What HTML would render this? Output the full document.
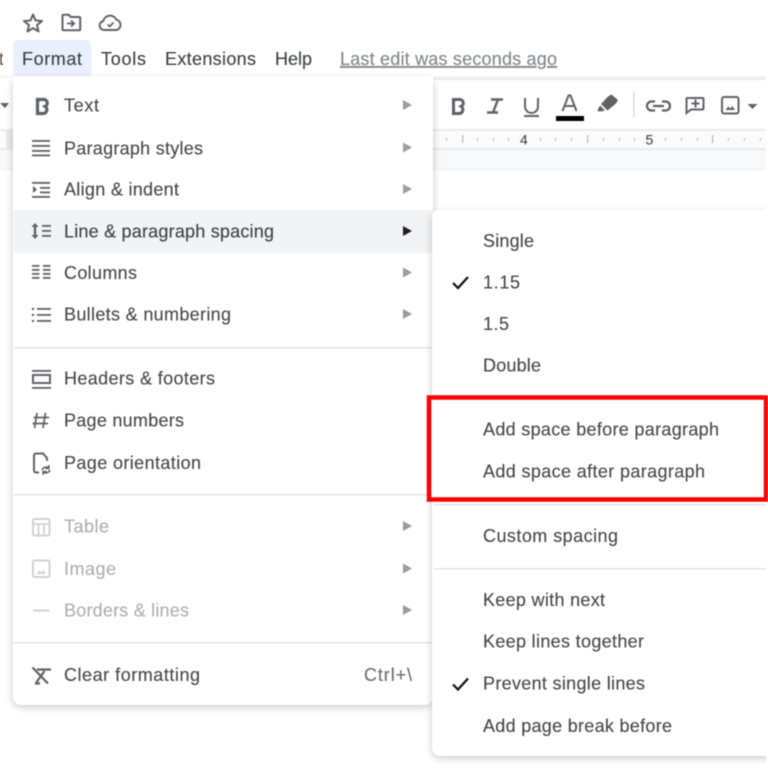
<!DOCTYPE html>
<html lang="en"><head><meta charset="utf-8"><title>Format menu</title>
<style>
html,body{margin:0;padding:0;background:#fff;width:768px;height:770px;overflow:hidden}
svg{display:block;filter:blur(.45px)}
text{font-family:"Liberation Sans",sans-serif;font-size:18px;fill:#45484c;stroke:#45484c;stroke-width:.12px}
.m{fill:#3c4043}
.d{fill:#abafb5;stroke:#abafb5}
.l{fill:#80868b;stroke:#80868b;text-decoration:underline}
.i{fill:none;stroke:#5f6368;stroke-width:2}
.g{fill:#5f6368}
.a{fill:#9a9da1}
</style></head><body>
<svg width="768" height="770" viewBox="0 0 768 770" xmlns="http://www.w3.org/2000/svg">
<defs>
<filter id="s" x="-10%" y="-10%" width="120%" height="120%"><feGaussianBlur stdDeviation="4"/></filter>
</defs>
<rect width="768" height="770" fill="#fff"/>

<!-- top icons -->
<path d="M33 14.500l2.500 6 6.500.5-5 4.200 1.600 6.300-5.600-3.400-5.600 3.400 1.600-6.300-5-4.200 6.500-.5z" fill="none" stroke="#5f6368" stroke-width="2" stroke-linejoin="round"/>
<path d="M62.500 17v-1.500a.8.8 0 0 1 .8-.8h5.500l2 2.300h8.400a1 1 0 0 1 1 1v11.300a1 1 0 0 1-1 1H63.500a1 1 0 0 1-1-1z" class="i"/>
<path d="M67 23.500h7M71 20.500l3.200 3-3.200 3" fill="none" stroke="#5f6368" stroke-width="1.800"/>
<path d="M107 30h-3a4.500 4.500 0 0 1-.8-8.900 7 7 0 0 1 13.100-1.500 5.400 5.400 0 0 1 .5 10.400z" class="i"/>
<path d="M107.500 24.500l2.300 2 3.700-4" fill="none" stroke="#5f6368" stroke-width="1.700"/>

<!-- menu bar -->
<text x="-8" y="65" class="m" textLength="11" lengthAdjust="spacingAndGlyphs">at</text>
<path d="M13.300 44a4 4 0 0 1 4-4h70a4 4 0 0 1 4 4v32h-78z" fill="#e8f0fe"/>
<text x="22" y="65" class="m" textLength="60" lengthAdjust="spacing">Format</text>
<text x="101" y="65" class="m" textLength="45" lengthAdjust="spacing">Tools</text>
<text x="165" y="65" class="m" textLength="91" lengthAdjust="spacing">Extensions</text>
<text x="275" y="65" class="m" textLength="37" lengthAdjust="spacing">Help</text>
<text x="340" y="65" class="l" textLength="217" lengthAdjust="spacing">Last edit was seconds ago</text>

<!-- toolbar and ruler background -->
<rect x="0" y="76" width="766" height="2" fill="#f1f3f4"/>
<rect x="433" y="78" width="333" height="2" fill="#e8eaed"/>
<rect x="0" y="129" width="766" height="2" fill="#e8eaed"/>
<rect x="0" y="131" width="766" height="17" fill="#fbfbfc"/>
<rect x="0" y="148" width="766" height="2" fill="#e8eaed"/>
<rect x="0" y="150" width="766" height="20" fill="#f8f9fa"/>
<rect x="0" y="169" width="766" height="1" fill="#eceef0"/>
<path d="M0 103h9l-4 5z" fill="#5f6368"/>
<rect x="6" y="130" width="7" height="18" fill="#e8eaed"/>

<!-- toolbar icons -->
<path d="M453.500 99.500h6a3.600 3.600 0 0 1 1.600 6.900 3.900 3.900 0 0 1-1.600 7.100h-6z" fill="none" stroke="#5f6368" stroke-width="3"/>
<path d="M491 99.500h12M487 112.500h11M498 99.500l-5 13" fill="none" stroke="#5f6368" stroke-width="2.400"/>
<path d="M525 98v8.500a6.500 6.500 0 0 0 13 0V98" fill="none" stroke="#5f6368" stroke-width="2"/>
<rect x="524" y="115" width="15" height="2" fill="#5f6368"/>
<path d="M562.500 111l6-15.500h2l6 15.500M564.500 106h10" fill="none" stroke="#5f6368" stroke-width="2"/>
<rect x="556" y="116" width="28" height="5" fill="#000"/>
<path d="M611.500 94.500l6.500 5.500-2 3.500-8.500 7-6.500-6.500 7-7.500z" fill="#5f6368"/><path d="M600 105.500l5 5-3 .8-3.800.2-.6-1.500z" fill="#5f6368"/>
<rect x="633" y="92" width="1.500" height="25" fill="#dadce0"/>
<path d="M655 101.500h-3.500a4.500 4.500 0 0 0 0 9h3.500M662 101.500h3.500a4.500 4.500 0 0 1 0 9H662M653 106h11" fill="none" stroke="#5f6368" stroke-width="2.300"/>
<path d="M687.500 98h15a1 1 0 0 1 1 1v9.500a1 1 0 0 1-1 1h-11.500l-4.500 3.500V99a1 1 0 0 1 1-1z" class="i"/>
<path d="M695.500 99.500v8M691.500 103.500h8" fill="none" stroke="#5f6368" stroke-width="2"/>
<rect x="722" y="97" width="16.500" height="16.500" rx="2" class="i"/>
<path d="M725.500 110l2.800-3.500 2 2 2-2.500 2.700 4z" fill="#5f6368"/>
<path d="M747.500 104h10l-5 5z" fill="#5f6368"/>

<!-- ruler -->
<g fill="#b8bbbf">
<rect x="446" y="138" width="1" height="3"/><rect x="462" y="135" width="1.300" height="8"/>
<rect x="477" y="138" width="1" height="3"/><rect x="493" y="138" width="1" height="3"/><rect x="508" y="138" width="1" height="3"/>
<rect x="540" y="138" width="1" height="3"/><rect x="555" y="138" width="1" height="3"/><rect x="571" y="138" width="1" height="3"/>
<rect x="587" y="135" width="1.300" height="8"/>
<rect x="603" y="138" width="1" height="3"/><rect x="619" y="138" width="1" height="3"/><rect x="634" y="138" width="1" height="3"/>
<rect x="665" y="138" width="1" height="3"/><rect x="681" y="138" width="1" height="3"/><rect x="697" y="138" width="1" height="3"/>
<rect x="712" y="135" width="1.300" height="8"/>
<rect x="728" y="138" width="1" height="3"/><rect x="744" y="138" width="1" height="3"/><rect x="760" y="138" width="1" height="3"/>
</g>
<text x="520" y="144.500" style="font-size:14px">4</text>
<text x="645.500" y="144.500" style="font-size:14px">5</text>

<!-- left menu -->
<rect x="13" y="79" width="420" height="628" rx="8" fill="#000" opacity=".22" filter="url(#s)"/>
<path d="M13 76h420v621a8 8 0 0 1-8 8H21a8 8 0 0 1-8-8z" fill="#fff"/>
<rect x="14" y="210" width="418" height="43" fill="#f1f3f4"/>
<g fill="#e3e4e6">
<rect x="14" y="347" width="418" height="1.500"/>
<rect x="14" y="494" width="418" height="1.500"/>
<rect x="14" y="642" width="418" height="1.500"/>
</g>

<text x="64" y="111.500" textLength="35" lengthAdjust="spacing">Text</text>
<text x="64" y="154.500" textLength="139" lengthAdjust="spacing">Paragraph styles</text>
<text x="64" y="195.500" textLength="115" lengthAdjust="spacing">Align &amp; indent</text>
<text x="64" y="237.500" class="m" textLength="210" lengthAdjust="spacing">Line &amp; paragraph spacing</text>
<text x="64" y="279" textLength="73" lengthAdjust="spacing">Columns</text>
<text x="64" y="320.500" textLength="167" lengthAdjust="spacing">Bullets &amp; numbering</text>
<text x="64" y="384.500" textLength="151" lengthAdjust="spacing">Headers &amp; footers</text>
<text x="64" y="426.500" textLength="120" lengthAdjust="spacing">Page numbers</text>
<text x="64" y="469" textLength="137" lengthAdjust="spacing">Page orientation</text>
<text x="64" y="532.500" class="d" textLength="45" lengthAdjust="spacing">Table</text>
<text x="64" y="575" class="d" textLength="52" lengthAdjust="spacing">Image</text>
<text x="64" y="616.500" class="d" textLength="125" lengthAdjust="spacing">Borders &amp; lines</text>
<text x="64" y="681" textLength="136" lengthAdjust="spacing">Clear formatting</text>
<text x="364" y="681" style="fill:#6a6d71;stroke:#6a6d71" textLength="48" lengthAdjust="spacing">Ctrl+\</text>

<!-- left menu arrows -->
<g class="a">
<path d="M403 100l9 5-9 5z"/><path d="M403 142.500l9 5-9 5z"/><path d="M403 184l9 5-9 5z"/>
<path d="M403 267.500l9 5-9 5z"/><path d="M403 309l9 5-9 5z"/>
<path d="M403 521l9 5-9 5z"/><path d="M403 563.500l9 5-9 5z"/><path d="M403 605l9 5-9 5z"/>
</g>
<path d="M403 226l9 5-9 5z" fill="#202124"/>

<!-- left menu icons -->
<path d="M37.500 99.500h6a3.600 3.600 0 0 1 1.600 6.900 3.900 3.900 0 0 1-1.600 7.100h-6z" fill="none" stroke="#5f6368" stroke-width="3.200"/>
<g class="g">
<rect x="32" y="140" width="18" height="1.800"/><rect x="32" y="145" width="18" height="1.800"/><rect x="32" y="150" width="18" height="1.800"/><rect x="32" y="154.500" width="18" height="1.800"/>
<rect x="32" y="182" width="18" height="1.800"/><rect x="40" y="187" width="10" height="1.800"/><rect x="40" y="191.500" width="10" height="1.800"/><rect x="32" y="196" width="18" height="1.800"/>
<path d="M33 186v7l4-3.500z"/>
<path d="M35 223l3.500 4h-2.300v8h2.300l-3.500 4-3.500-4h2.300v-8h-2.300z"/>
<rect x="42" y="225" width="9" height="1.800"/><rect x="42" y="230" width="9" height="1.800"/><rect x="42" y="235" width="9" height="1.800"/>
<rect x="32" y="265" width="7.500" height="1.800"/><rect x="32" y="269" width="7.500" height="1.800"/><rect x="32" y="273" width="7.500" height="1.800"/><rect x="32" y="277" width="7.500" height="1.800"/>
<rect x="43" y="265" width="7.500" height="1.800"/><rect x="43" y="269" width="7.500" height="1.800"/><rect x="43" y="273" width="7.500" height="1.800"/><rect x="43" y="277" width="7.500" height="1.800"/>
<circle cx="33" cy="309" r="1.200"/><circle cx="33" cy="315" r="1.200"/><circle cx="33" cy="321" r="1.200"/>
<rect x="37" y="308" width="14" height="1.800"/><rect x="37" y="314" width="14" height="1.800"/><rect x="37" y="320" width="14" height="1.800"/>
<rect x="32" y="370" width="19" height="1.800"/><rect x="32" y="387" width="19" height="1.800"/>
</g>
<rect x="33" y="375" width="17" height="8" class="i"/>
<path d="M37 413l-2.500 15M45.500 413L43 428M33.500 417.500H49M32.500 423.500H48" fill="none" stroke="#5f6368" stroke-width="1.800"/>
<path d="M47 461v-3l-4-4.500h-7a2 2 0 0 0-2 2v15a2 2 0 0 0 2 2h3" class="i"/>
<path d="M42 470a4.500 4.500 0 0 1 7-2M50 470a4.500 4.500 0 0 1-7 2" fill="none" stroke="#5f6368" stroke-width="1.600"/>
<path d="M49 465v3.500h-3.500M43 475v-3.500h3.500" fill="none" stroke="#5f6368" stroke-width="1.400"/>

<rect x="33" y="519" width="16.500" height="16.500" rx="1.500" fill="none" stroke="#d0d2d5" stroke-width="2"/>
<path d="M33 524h16.500M38.500 524v11.500M44 524v11.500" fill="none" stroke="#d0d2d5" stroke-width="1.800"/>
<rect x="33" y="560.500" width="16.500" height="16.500" rx="1.500" fill="none" stroke="#d0d2d5" stroke-width="2"/>
<path d="M36.500 574l3-3.500 1.800 1.800 2-2.300 2.700 4z" fill="#d0d2d5"/>
<rect x="33" y="609.500" width="16.500" height="2" fill="#d0d2d5"/>

<path d="M37 669.500h14M32.500 667.500l15.500 16M44.500 671l-8.500 12M35 683.500h5" fill="none" stroke="#5f6368" stroke-width="2.200"/>

<!-- right menu -->
<rect x="432" y="213" width="345" height="545" rx="8" fill="#000" opacity=".22" filter="url(#s)"/>
<path d="M432 216a6 6 0 0 1 6-6h330v546H440a8 8 0 0 1-8-8z" fill="#fff"/>
<rect x="766" y="170" width="2" height="600" fill="#fff"/>
<rect x="434" y="504" width="332" height="1.500" fill="#e3e4e6"/>
<rect x="434" y="568" width="332" height="1.500" fill="#e3e4e6"/>

<text x="483" y="247" textLength="51" lengthAdjust="spacing">Single</text>
<text x="483" y="288.500" textLength="37" lengthAdjust="spacing">1.15</text>
<text x="483" y="330" textLength="26" lengthAdjust="spacing">1.5</text>
<text x="483" y="371.500" textLength="58" lengthAdjust="spacing">Double</text>
<text x="483" y="435.500" textLength="236" lengthAdjust="spacing">Add space before paragraph</text>
<text x="483" y="477.500" textLength="222" lengthAdjust="spacing">Add space after paragraph</text>
<text x="483" y="542" textLength="135" lengthAdjust="spacing">Custom spacing</text>
<text x="483" y="606" textLength="122" lengthAdjust="spacing">Keep with next</text>
<text x="483" y="647.500" textLength="161" lengthAdjust="spacing">Keep lines together</text>
<text x="483" y="689.500" textLength="162" lengthAdjust="spacing">Prevent single lines</text>
<text x="483" y="732" textLength="189" lengthAdjust="spacing">Add page break before</text>

<path d="M453 283l5 5 10-11" fill="none" stroke="#111" stroke-width="2.200"/>
<path d="M453 684.500l5 5 10-11" fill="none" stroke="#111" stroke-width="2.200"/>

<!-- red box -->
<rect x="429" y="397.500" width="337" height="102" fill="none" stroke="#f00" stroke-width="4.500"/>
</svg>
</body></html>
